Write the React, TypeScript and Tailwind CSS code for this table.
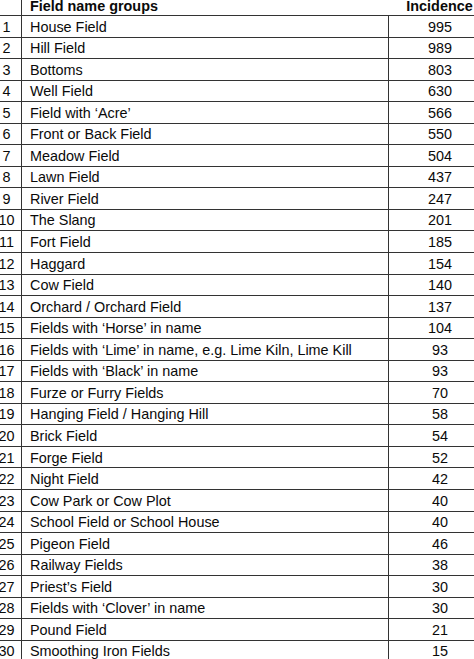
import React from "react";

const rows: [number, string, number][] = [
  [1, "House Field", 995],
  [2, "Hill Field", 989],
  [3, "Bottoms", 803],
  [4, "Well Field", 630],
  [5, "Field with \u2018Acre\u2019", 566],
  [6, "Front or Back Field", 550],
  [7, "Meadow Field", 504],
  [8, "Lawn Field", 437],
  [9, "River Field", 247],
  [10, "The Slang", 201],
  [11, "Fort Field", 185],
  [12, "Haggard", 154],
  [13, "Cow Field", 140],
  [14, "Orchard / Orchard Field", 137],
  [15, "Fields with \u2018Horse\u2019 in name", 104],
  [16, "Fields with \u2018Lime\u2019 in name, e.g. Lime Kiln, Lime Kill", 93],
  [17, "Fields with \u2018Black\u2019 in name", 93],
  [18, "Furze or Furry Fields", 70],
  [19, "Hanging Field / Hanging Hill", 58],
  [20, "Brick Field", 54],
  [21, "Forge Field", 52],
  [22, "Night Field", 42],
  [23, "Cow Park or Cow Plot", 40],
  [24, "School Field or School House", 40],
  [25, "Pigeon Field", 46],
  [26, "Railway Fields", 38],
  [27, "Priest\u2019s Field", 30],
  [28, "Fields with \u2018Clover\u2019 in name", 30],
  [29, "Pound Field", 21],
  [30, "Smoothing Iron Fields", 15],
];

export default function App() {
  return (
    <div className="w-[474px] h-[659px] overflow-hidden bg-white text-[#0a0a0a] text-[14.4px] leading-none [font-family:'Liberation_Sans',Arial,sans-serif]">
      <div className="w-[499px] ml-[-8px] mt-[-6.55px] flex flex-col">
        <div className="flex h-[22.55px] border-b border-[#333333] font-bold">
          <div className="w-[30px] shrink-0 border-r border-[#333333]" />
          <div className="w-[366px] shrink-0 flex items-center pl-[8px] pt-[3px]">Field name groups</div>
          <div className="flex-1 flex items-center justify-center pt-[3px]">Incidence</div>
        </div>
        {rows.map(([n, name, v]) => (
          <div key={n} className="flex h-[21.55px] border-b border-[#333333]">
            <div className="w-[30px] shrink-0 border-r border-[#333333] flex items-center justify-center pt-[1px]">{n}</div>
            <div className="w-[366px] shrink-0 flex items-center pl-[8px] pt-[1px] whitespace-nowrap">{name}</div>
            <div className="flex-1 border-l border-[#333333] flex items-center justify-center pt-[1px]">{v}</div>
          </div>
        ))}
      </div>
    </div>
  );
}
